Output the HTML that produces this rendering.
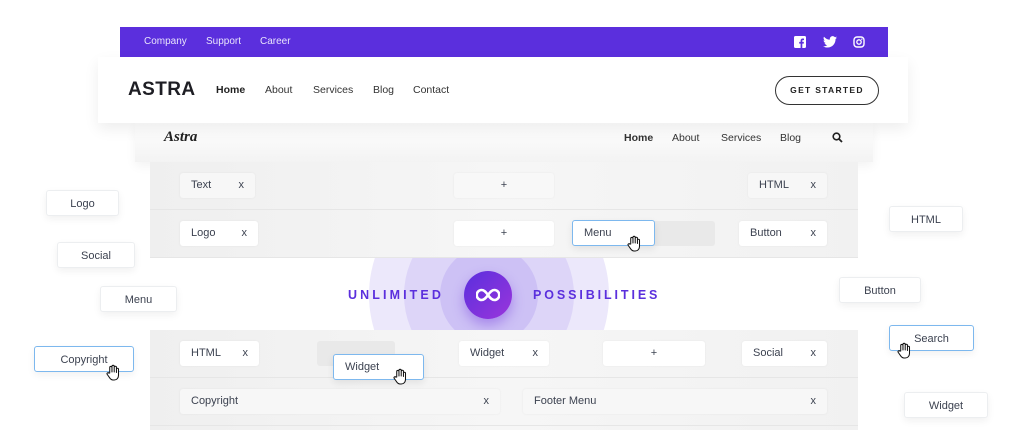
<!DOCTYPE html>
<html><head><style>
*{margin:0;padding:0;box-sizing:border-box}
body{width:1035px;height:430px;background:#fff;position:relative;overflow:hidden;font-family:"Liberation Sans",sans-serif;color:#3c4250}
.a{position:absolute}
.b{position:absolute;background:#fff;border-radius:3px;font-size:11px;height:25px;line-height:25px;padding-left:11px;box-shadow:0 0 2px rgba(0,0,0,.06)}
.b i{position:absolute;right:11px;font-style:normal;font-size:11px}
.c{text-align:center;padding-left:0}
.f{position:absolute;background:#fff;border-radius:3px;font-size:11px;height:26px;line-height:26px;text-align:center;border:1px solid #eceef0;box-shadow:0 3px 8px rgba(0,0,0,.06)}
.bl{border:1px solid #7db8ee}
.g{background:#f3f3f3;position:absolute}
.hand{position:absolute;width:14px;height:17px}
</style></head><body>
<svg width="0" height="0" style="position:absolute"><defs><g id="h"><path d="M4 9V3.2a1.2 1.2 0 0 1 2.400 0V8V2a1.2 1.2 0 0 1 2.400 0v6V3a1.2 1.2 0 0 1 2.400 0v5.500V5a1.1 1.1 0 0 1 2.200 0v6.500c0 3-1.800 5-4.600 5H7.500c-1.700 0-2.700-.9-3.600-2.300L1.300 10.500a1.100 1.100 0 0 1 1.800-1.300z" fill="#fff" stroke="#111" stroke-width="1.1" stroke-linejoin="round"/></g></defs></svg>
<div class="a" style="left:120px;top:27px;width:768px;height:30px;background:#5b2fdd;color:#e8e4fb;font-size:10px;line-height:30px">
<span class="a" style="left:24px">Company</span><span class="a" style="left:86px">Support</span><span class="a" style="left:140px">Career</span>
<svg class="a" style="left:674px;top:9px" width="12" height="12" viewBox="0 0 12 12"><rect width="12" height="12" rx="1.5" fill="#fff"/><path d="M8.300 12V7.600h1.400l.2-1.700H8.300V4.900c0-.5.2-.8.8-.8h.9V2.600c-.2 0-.7-.1-1.300-.1-1.300 0-2.100.8-2.100 2.200V5.900H5.200v1.700h1.400V12z" fill="#5b2fdd"/></svg>
<svg class="a" style="left:703px;top:9px" width="14" height="12" viewBox="0 0 24 20"><path d="M24 2.400c-.9.4-1.800.7-2.800.8 1-.6 1.800-1.600 2.200-2.700-1 .6-2 1-3.100 1.200C19.300.7 18 0 16.600 0c-2.700 0-4.900 2.200-4.900 4.900 0 .4 0 .8.1 1.100C7.700 5.800 4.100 3.900 1.700.9c-.4.700-.7 1.600-.7 2.500 0 1.700.9 3.200 2.200 4.100-.8 0-1.600-.2-2.200-.6v.1c0 2.400 1.700 4.400 3.900 4.800-.4.1-.8.2-1.300.2-.3 0-.6 0-.9-.1.6 2 2.400 3.400 4.600 3.400-1.700 1.300-3.800 2.100-6.100 2.100-.4 0-.8 0-1.200-.1 2.200 1.400 4.800 2.200 7.500 2.200 9.100 0 14-7.500 14-14v-.6c1-.7 1.800-1.600 2.500-2.500z" fill="#fff"/></svg>
<svg class="a" style="left:733px;top:9px" width="12" height="12" viewBox="0 0 12 12"><rect x="1" y="1" width="10" height="10" rx="3" fill="none" stroke="#fff" stroke-width="1.4"/><circle cx="6" cy="6" r="2.2" fill="none" stroke="#fff" stroke-width="1.3"/><circle cx="8.800" cy="3.200" r=".7" fill="#fff"/></svg>
</div>
<div class="a" style="left:135px;top:123px;width:738px;height:39px;background:linear-gradient(#fff,#f3f3f3);box-shadow:0 4px 10px rgba(0,0,0,.05)"></div>
<div class="a" style="left:164px;top:129px;font-family:'Liberation Serif',serif;font-style:italic;font-weight:bold;font-size:15px;color:#222">Astra</div>
<div class="a" style="top:132px;font-size:10.5px;color:#333;left:624px;font-weight:bold">Home</div>
<div class="a" style="top:132px;font-size:10.5px;color:#333;left:672px">About</div>
<div class="a" style="top:132px;font-size:10.5px;color:#333;left:721px">Services</div>
<div class="a" style="top:132px;font-size:10.5px;color:#333;left:780px">Blog</div>
<svg class="a" style="left:832px;top:132px" width="11" height="11" viewBox="0 0 11 11"><circle cx="4.500" cy="4.500" r="3.300" fill="none" stroke="#222" stroke-width="1.600"/><path d="M7 7l3 3" stroke="#222" stroke-width="1.800"/></svg>
<div class="a" style="left:98px;top:57px;width:810px;height:66px;background:#fff;box-shadow:0 6px 14px rgba(0,0,0,.07)">
<div class="a" style="left:30px;top:22px;font-size:19px;font-weight:bold;letter-spacing:.4px;color:#1e1e24">ASTRA</div>
<div class="a" style="left:118px;top:27px;font-size:10.5px;font-weight:bold;color:#222">Home</div>
<div class="a" style="left:167px;top:27px;font-size:10.5px;color:#333">About</div>
<div class="a" style="left:215px;top:27px;font-size:10.5px;color:#333">Services</div>
<div class="a" style="left:275px;top:27px;font-size:10.5px;color:#333">Blog</div>
<div class="a" style="left:315px;top:27px;font-size:10.5px;color:#333">Contact</div>
<div class="a" style="left:677px;top:19px;width:104px;height:29px;border:1px solid #333;border-radius:15px;font-size:8.5px;font-weight:bold;letter-spacing:1.300px;text-align:center;line-height:27px;color:#222">GET STARTED</div>
</div>
<div class="g" style="left:150px;top:162px;width:708px;height:96px;background:linear-gradient(90deg,#efefef,#f6f6f6 50%,#f1f1f1)"></div>
<div class="a" style="left:150px;top:209px;width:708px;height:1px;background:#e6e6e6"></div>
<div class="a" style="left:150px;top:257px;width:708px;height:1px;background:#e6e6e6"></div>
<div class="a" style="left:150px;top:258px;width:708px;height:72px;overflow:hidden">
<div class="a" style="left:219px;top:-83px;width:240px;height:240px;border-radius:50%;background:#ece8fb"></div>
<div class="a" style="left:254px;top:-48px;width:170px;height:170px;border-radius:50%;background:#ddd5f8"></div>
<div class="a" style="left:290px;top:-12px;width:98px;height:98px;border-radius:50%;background:#cdc1f5"></div>
<div class="a" style="left:314px;top:13px;width:48px;height:48px;border-radius:50%;background:linear-gradient(135deg,#5a2fdd,#9a35dc);box-shadow:0 6px 12px rgba(110,50,220,.4)"></div>
<svg class="a" style="left:326px;top:29px" width="24" height="16" viewBox="0 0 24 16"><path d="M12 8C9.500 4.500 8 3 5.700 3a5 5 0 0 0 0 10C8 13 9.500 11.500 12 8s4-5 6.300-5a5 5 0 0 1 0 10C16 13 14.500 11.500 12 8z" fill="none" stroke="#fff" stroke-width="2.600"/></svg>
</div>
<div class="a" style="left:348px;top:288px;font-size:12.5px;font-weight:bold;letter-spacing:3.1px;color:#5b2fdd">UNLIMITED</div>
<div class="a" style="left:533px;top:288px;font-size:12.5px;font-weight:bold;letter-spacing:2.9px;color:#5b2fdd">POSSIBILITIES</div>
<div class="g" style="left:150px;top:330px;width:708px;height:100px;background:linear-gradient(90deg,#efefef,#f6f6f6 50%,#f1f1f1)"></div>
<div class="a" style="left:150px;top:377px;width:708px;height:1px;background:#e6e6e6"></div>
<div class="a" style="left:150px;top:425px;width:708px;height:1px;background:#e6e6e6"></div>
<div class="b" style="left:180px;top:173px;width:75px;background:#f7f7f7">Text<i>x</i></div>
<div class="b c" style="left:454px;top:173px;width:100px;background:#f8f8f8">+</div>
<div class="b" style="left:748px;top:173px;width:79px;background:#f7f7f7">HTML<i>x</i></div>
<div class="b" style="left:180px;top:221px;width:78px">Logo<i>x</i></div>
<div class="b c" style="left:454px;top:221px;width:100px">+</div>
<div class="a" style="left:640px;top:221px;width:75px;height:25px;background:#e9e9e9;border-radius:3px"></div>
<div class="b bl" style="left:572px;top:220px;width:83px;height:26px;box-shadow:0 3px 8px rgba(0,0,0,.08)">Menu</div>
<svg class="hand" style="left:627px;top:235px" viewBox="0 0 15 17"><use href="#h"/></svg>
<div class="b" style="left:739px;top:221px;width:88px">Button<i>x</i></div>
<div class="b" style="left:180px;top:341px;width:79px">HTML<i>x</i></div>
<div class="a" style="left:317px;top:341px;width:78px;height:25px;background:#e9e9e9;border-radius:3px"></div>
<div class="b bl" style="left:333px;top:354px;width:91px;height:26px;box-shadow:0 3px 8px rgba(0,0,0,.08)">Widget</div>
<svg class="hand" style="left:393px;top:368px" viewBox="0 0 15 17"><use href="#h"/></svg>
<div class="b" style="left:459px;top:341px;width:90px">Widget<i>x</i></div>
<div class="b c" style="left:603px;top:341px;width:102px">+</div>
<div class="b" style="left:742px;top:341px;width:85px">Social<i>x</i></div>
<div class="b" style="left:180px;top:389px;width:320px;background:#f7f7f7">Copyright<i>x</i></div>
<div class="b" style="left:523px;top:389px;width:304px;background:#f7f7f7">Footer Menu<i>x</i></div>
<div class="f" style="left:46px;top:190px;width:73px">Logo</div>
<div class="f" style="left:57px;top:242px;width:78px">Social</div>
<div class="f" style="left:100px;top:286px;width:77px">Menu</div>
<div class="f bl" style="left:34px;top:346px;width:100px">Copyright</div>
<svg class="hand" style="left:106px;top:364px" viewBox="0 0 15 17"><use href="#h"/></svg>
<div class="f" style="left:889px;top:206px;width:74px">HTML</div>
<div class="f" style="left:839px;top:277px;width:82px">Button</div>
<div class="f bl" style="left:889px;top:325px;width:85px">Search</div>
<svg class="hand" style="left:897px;top:342px" viewBox="0 0 15 17"><use href="#h"/></svg>
<div class="f" style="left:904px;top:392px;width:84px">Widget</div>
</body></html>
